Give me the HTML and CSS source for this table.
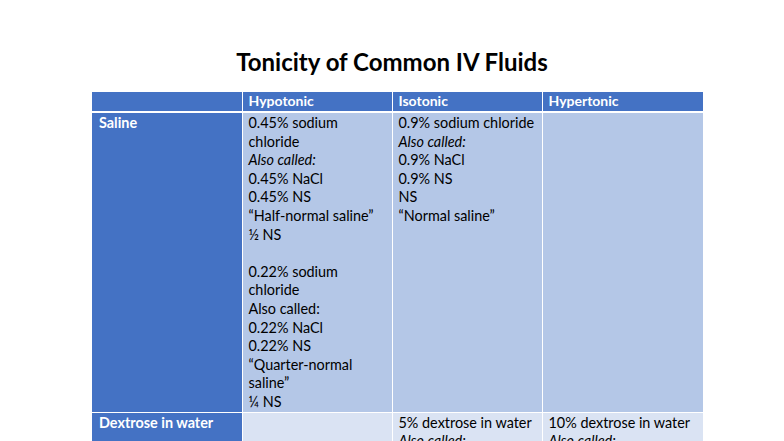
FILE: index.html
```html
<!DOCTYPE html>
<html>
<head>
<meta charset="utf-8">
<link rel="stylesheet" href="styles.css">
</head>
<body>
<div class="slide">
  <h1 class="title">Tonicity of Common IV Fluids</h1>
  <table class="fluids">
    <colgroup>
      <col class="c1"><col class="c2"><col class="c3"><col class="c4">
    </colgroup>
    <thead>
      <tr>
        <th></th>
        <th>Hypotonic</th>
        <th>Isotonic</th>
        <th>Hypertonic</th>
      </tr>
    </thead>
    <tbody>
      <tr class="odd">
        <th class="rowhead">Saline</th>
        <td>0.45% sodium chloride<br><i>Also called:</i><br>0.45% NaCl<br>0.45% NS<br>“Half-normal saline”<br>½ NS<br><br>0.22% sodium chloride<br>Also called:<br>0.22% NaCl<br>0.22% NS<br>“Quarter-normal saline”<br>¼ NS</td>
        <td>0.9% sodium chloride<br><i>Also called:</i><br>0.9% NaCl<br>0.9% NS<br>NS<br>“Normal saline”</td>
        <td></td>
      </tr>
      <tr class="even">
        <th class="rowhead">Dextrose in water</th>
        <td></td>
        <td>5% dextrose in water<br><i>Also called:</i></td>
        <td>10% dextrose in water<br><i>Also called:</i></td>
      </tr>
    </tbody>
  </table>
</div>
</body>
</html>
```
FILE: styles.css
```css
html, body {
  margin: 0;
  padding: 0;
  background: #ffffff;
}
.slide {
  width: 784px;
  height: 441px;
  overflow: hidden;
  display: flex;
  flex-direction: column;
  font-family: Lato, "Open Sans", sans-serif;
}
.slide > * {
  flex-shrink: 0;
}
.title {
  margin: 48px 0 0 0;
  height: 44px;
  text-align: center;
  font-family: Lato, sans-serif;
  font-weight: bold;
  font-size: 24px;
  line-height: 28px;
  color: #000;
}
.fluids {
  margin-left: 92px;
  width: 611px;
  table-layout: fixed;
  border-collapse: collapse;
  font-size: 14.4px;
  line-height: 18.6px;
}
.c1 { width: 150px; }
.c2 { width: 150px; }
.c3 { width: 150px; }
.c4 { width: 161px; }
.fluids th, .fluids td {
  text-align: left;
  vertical-align: top;
  padding: 0 4px 0 6px;
  border: 1px solid #ffffff;
}
.fluids thead th {
  background: #4472c4;
  color: #ffffff;
  font-weight: bold;
  font-size: 14px;
  border-top: none;
  border-bottom: 2px solid #ffffff;
  height: 19px;
}
.fluids thead th:first-child { border-left: none; }
.fluids thead th:last-child { border-right: none; }
.fluids .rowhead {
  background: #4472c4;
  color: #ffffff;
  font-weight: bold;
  border-left: none;
  padding-left: 7px;
}
.fluids td:last-child { border-right: none; }
.odd td { background: #b4c7e7; color: #000; }
.even td { background: #dae3f3; color: #000; }
.fluids tbody td, .fluids tbody th { padding-top: 1px; }
```
